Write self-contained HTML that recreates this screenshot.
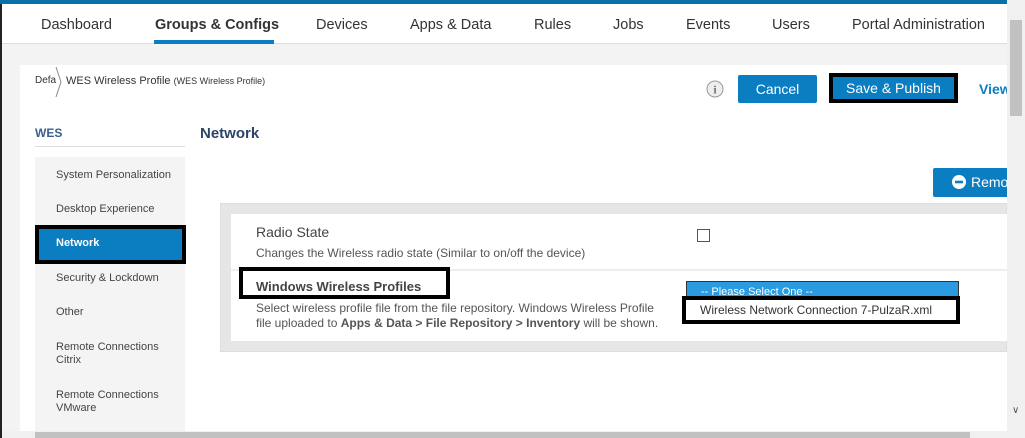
<!DOCTYPE html>
<html><head><style>
*{margin:0;padding:0;box-sizing:border-box}
body{width:1025px;height:438px;overflow:hidden;background:#f3f3f3;font-family:"Liberation Sans",Arial,sans-serif;position:relative}
.a{position:absolute}
.nav span{position:absolute;top:17px;font-size:14.5px;color:#333}
.side div{position:absolute;left:56px;font-size:11px;color:#444;line-height:13px}
</style></head><body>
<div class="a" style="left:0;top:0;width:2px;height:438px;background:#222"></div>
<div class="a" style="left:0;top:0;width:1025px;height:4px;background:#0b6fa8"></div>
<div class="a" style="left:2px;top:4px;width:1005px;height:40px;background:#fff;border-bottom:1px solid #ddd"></div>
<div class="nav">
<span style="left:41px">Dashboard</span>
<span style="left:155px;font-weight:bold">Groups &amp; Configs</span>
<span style="left:316px">Devices</span>
<span style="left:410px">Apps &amp; Data</span>
<span style="left:534px">Rules</span>
<span style="left:613px">Jobs</span>
<span style="left:686px">Events</span>
<span style="left:772px">Users</span>
<span style="left:852px">Portal Administration</span>
</div>
<div class="a" style="left:154px;top:40px;width:120px;height:4px;background:#0b7dc1"></div>
<div class="a" style="left:20px;top:65px;width:987px;height:366px;background:#fff"></div>
<div class="a" style="left:35px;top:75px;font-size:10px;color:#333">Defa</div>
<svg class="a" style="left:54px;top:66px" width="10" height="32"><path d="M2 1 L7 16 L2 31" stroke="#888" fill="none"/></svg>
<div class="a" style="left:66px;top:75px;font-size:11px;color:#333">WES Wireless Profile <span style="font-size:9px">(WES Wireless Profile)</span></div>
<svg class="a" style="left:706px;top:80px" width="18" height="18"><circle cx="9" cy="9" r="8" fill="#eee" stroke="#999"/><text x="9" y="13.5" text-anchor="middle" font-size="12" font-weight="bold" fill="#777" font-family="Liberation Serif">i</text></svg>
<div class="a" style="left:738px;top:75px;width:79px;height:28px;background:#0b7dc1;border-radius:2px;color:#fff;font-size:14px;text-align:center;line-height:28px">Cancel</div>
<div class="a" style="left:829px;top:73px;width:129px;height:30px;background:#0b7dc1;border:4px solid #000;color:#fff;font-size:14px;text-align:center;line-height:22px">Save &amp; Publish</div>
<div class="a" style="left:979px;top:81px;font-size:14px;color:#0b7dc1;font-weight:bold">View</div>
<div class="a" style="left:35px;top:126px;font-size:12px;font-weight:bold;color:#3a5f8f">WES</div>
<div class="a" style="left:35px;top:146px;width:150px;height:1px;background:#ddd"></div>
<div class="a" style="left:200px;top:125px;font-size:15px;font-weight:bold;color:#2c4466">Network</div>
<div class="a" style="left:35px;top:157px;width:150px;height:274px;background:#f4f4f4"></div>
<div class="side">
<div style="top:169px">System Personalization</div>
<div style="top:203px">Desktop Experience</div>
<div style="top:272px">Security &amp; Lockdown</div>
<div style="top:306px">Other</div>
<div style="top:341px">Remote Connections<br>Citrix</div>
<div style="top:389px">Remote Connections<br>VMware</div>
</div>
<div class="a" style="left:35px;top:225px;width:151px;height:39px;background:#0b7dc1;border:4px solid #000"></div>
<div class="a" style="left:56px;top:237px;font-size:11px;color:#fff;font-weight:bold">Network</div>
<div class="a" style="left:933px;top:168px;width:80px;height:29px;background:#0b7dc1;border-radius:2px;color:#fff;font-size:14px;line-height:29px;padding-left:38px;white-space:nowrap;overflow:hidden">Remove</div>
<svg class="a" style="left:952px;top:175px" width="14" height="14"><circle cx="7" cy="7" r="7" fill="#fff"/><rect x="3" y="5.7" width="8" height="2.6" fill="#0b7dc1"/></svg>
<div class="a" style="left:220px;top:203px;width:787px;height:149px;background:#e6e6e6;border:1px solid #ddd"></div>
<div class="a" style="left:231px;top:214px;width:776px;height:127px;background:#fff"></div>
<div class="a" style="left:231px;top:269px;width:776px;height:2px;background:#eee"></div>
<div class="a" style="left:256px;top:224px;font-size:14px;color:#444">Radio State</div>
<div class="a" style="left:256px;top:246px;font-size:12px;color:#555">Changes the Wireless radio state (Similar to on/off the device)</div>
<div class="a" style="left:697px;top:229px;width:13px;height:13px;border:1px solid #555;background:#fff"></div>
<div class="a" style="left:239px;top:267px;width:211px;height:32px;border:4px solid #000"></div>
<div class="a" style="left:256px;top:279px;font-size:13px;font-weight:bold;color:#444">Windows Wireless Profiles</div>
<div class="a" style="left:256px;top:301px;font-size:12px;color:#555;line-height:15px">Select wireless profile file from the file repository. Windows Wireless Profile<br>file uploaded to <b>Apps &amp; Data &gt; File Repository &gt; Inventory</b> will be shown.</div>
<div class="a" style="left:686px;top:281px;width:273px;height:42px;border:1px solid #333;background:#fff;overflow:hidden">
<div style="background:#2a9be0;height:14px;color:#fff;font-size:11px;padding-left:14px;line-height:20px;overflow:hidden">-- Please Select One --</div></div>
<div class="a" style="left:682px;top:296px;width:278px;height:28px;border:4px solid #000;background:#fff;font-size:12px;color:#333;padding-left:14px;line-height:20px">Wireless Network Connection 7-PulzaR.xml</div>
<div class="a" style="left:1007px;top:0;width:18px;height:438px;background:#f0f0f0"></div>
<div class="a" style="left:1010px;top:20px;width:12px;height:96px;background:#c1c1c1"></div>
<div class="a" style="left:1012px;top:405px;font-size:10px;color:#555">&#8744;</div>
<div class="a" style="left:2px;top:431px;width:1005px;height:7px;background:#f0f0f0"></div>
<div class="a" style="left:35px;top:432px;width:935px;height:6px;background:#c1c1c1"></div>
</body></html>
